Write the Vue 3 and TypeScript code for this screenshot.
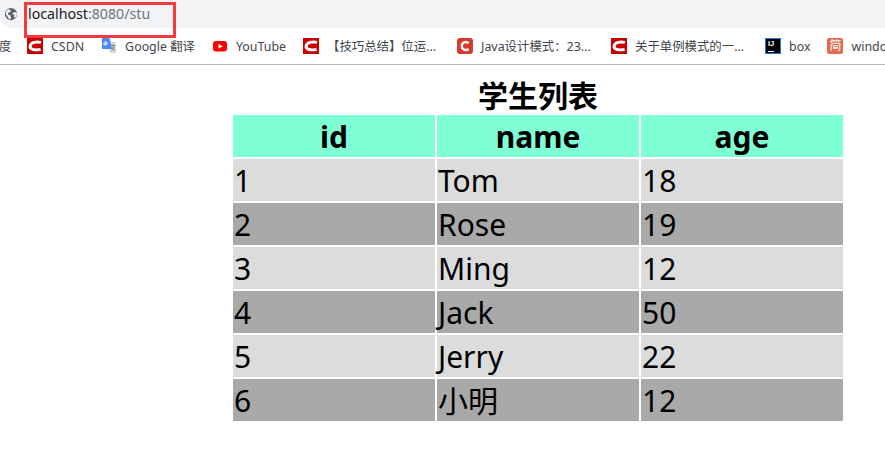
<script setup lang="ts">
interface Mark { label: string; kind: string; text: string; long?: boolean; }
const marks: Mark[] = [
  { label: 'CSDN', kind: 'csdn', text: '' },
  { label: 'Google 翻译', kind: 'gt', text: '' },
  { label: 'YouTube', kind: 'yt', text: '' },
  { label: '【技巧总结】位运...', kind: 'csdn', text: '', long: true },
  { label: 'Java设计模式：23...', kind: 'red', text: '', long: true },
  { label: '关于单例模式的一...', kind: 'csdn', text: '', long: true },
  { label: 'box', kind: 'ij', text: 'IJ' },
  { label: 'windows', kind: 'jian', text: '简' },
];
const students = [
  { id: 1, name: 'Tom', age: 18 },
  { id: 2, name: 'Rose', age: 19 },
  { id: 3, name: 'Ming', age: 12 },
  { id: 4, name: 'Jack', age: 50 },
  { id: 5, name: 'Jerry', age: 22 },
  { id: 6, name: '小明', age: 12 },
];
</script>

<template>
  <div class="page">
    <div class="topbar">
      <svg class="globe" viewBox="0 0 16 16" width="14" height="14">
        <circle cx="8" cy="8" r="7" fill="#5f6368" />
        <path d="M5 2.5 8 4 7 6 4.5 6.5 5 9l2.5.5L8 13 6 14 3 9.5 1.8 7 3 4ZM10 6.5l3.8-.8L15 8l-1.5 3.5-2 1 .2-3.5-2-1Z" fill="#f1f3f4" />
      </svg>
      <span class="url"><span class="host">localhost</span>:8080/stu</span>
      <div class="highlight"></div>
    </div>
    <div class="bookmarks">
      <span class="cut">度</span>
      <span v-for="m in marks" :key="m.label + m.kind" class="bm" :class="['bm-' + m.kind, { long: m.long }]">
        <span class="ico" :class="m.kind">
          <svg v-if="m.kind === 'yt'" viewBox="0 0 16 16" width="16" height="16">
            <rect x="1" y="3" width="14" height="10.5" rx="3" fill="#f00" />
            <path d="M6.5 5.8v5l4.2-2.5z" fill="#fff" />
          </svg>
          <svg v-else-if="m.kind === 'gt'" viewBox="0 0 16 16" width="16" height="16">
            <path d="M7 4h8v11H9z" fill="#d5d8dc" />
            <path d="M10 7.5h4M12 6.5v1M10.6 12.5c1.6-1 2.4-2.5 2.6-5M11 9c.6 1.4 1.6 2.6 3 3.4" stroke="#6b7078" stroke-width=".8" fill="none" />
            <path d="M1 0h7.5L11 11H1z" fill="#4c8bf5" />
            <path d="M7 5H4.6v1.3h1.2A1.6 1.6 0 1 1 5.4 4.3" stroke="#fff" fill="none" stroke-width="1" />
          </svg>
          <svg v-else-if="m.kind === 'csdn'" viewBox="0 0 16 16" width="16" height="16">
            <path d="M14 4.4C9.5 3.2 3.6 4.4 3.1 8.2 2.7 11.4 7.8 12.6 13.6 11.4" stroke="#fff" stroke-width="3" fill="none" />
          </svg>
          <svg v-else-if="m.kind === 'red'" viewBox="0 0 16 16" width="16" height="16">
            <path d="M11.6 5.2A4 4 0 1 0 11.6 10.8" stroke="#fff" stroke-width="2.4" fill="none" />
          </svg>
          <template v-else-if="m.kind === 'ij'">
            <span class="ij-text">{{ m.text }}</span>
            <span class="ij-line"></span>
          </template>
          <template v-else>{{ m.text }}</template>
        </span>
        <span class="label">{{ m.label }}</span>
      </span>
    </div>
    <main class="content">
      <h2 class="title">学生列表</h2>
      <table class="grid">
        <thead>
          <tr><th>id</th><th>name</th><th>age</th></tr>
        </thead>
        <tbody>
          <tr v-for="s in students" :key="s.id">
            <td>{{ s.id }}</td><td>{{ s.name }}</td><td>{{ s.age }}</td>
          </tr>
        </tbody>
      </table>
    </main>
  </div>
</template>

<style>
html, body { margin: 0; background: #fff; }
</style>

<style scoped>
.page {
  width: 885px;
  height: 465px;
  overflow: hidden;
  background: #fff;
  font-family: "Noto Sans", "Noto Sans CJK SC", sans-serif;
}
.topbar {
  position: relative;
  height: 28px;
  background: #f1f3f4;
  border-bottom-left-radius: 12px;
  display: flex;
  align-items: center;
  padding-left: 4px;
  box-sizing: border-box;
  gap: 10px;
}
.url {
  font: 14.2px/16px "Noto Sans", sans-serif;
  color: #70757a;
}
.host { color: #202124; }
.highlight {
  position: absolute;
  left: 24px;
  top: 2px;
  width: 152px;
  height: 36px;
  box-sizing: border-box;
  border: 3px solid #f33a3f;
  z-index: 2;
}
.bookmarks {
  height: 37px;
  box-sizing: border-box;
  border-bottom: 1px solid #b6b6b6;
  background: #fff;
  display: flex;
  align-items: center;
  white-space: nowrap;
  overflow: hidden;
  font-size: 12.4px;
  color: #41464c;
}
.cut { margin-left: -1px; width: 28px; flex: none; }
.bm { display: inline-flex; align-items: center; gap: 8px; flex: none; margin-right: 17px; }
.bm.long { margin-right: 0; }
.bm.long .label { width: 130px; }
.bm-jian { margin-right: 0; }
.ico {
  position: relative;
  width: 16px;
  height: 16px;
  flex: none;
  display: inline-flex;
  align-items: center;
  justify-content: center;
  font-weight: 700;
  line-height: 1;
}
.csdn { background: #c90000; }
.red { background: #d8392b; border-radius: 3px; }
.ij { background: #000; color: #fff; outline: 1px solid #1976d2; outline-offset: -1px; }
.ij-text {
  position: absolute;
  left: 3px;
  top: 2px;
  font: 700 7.5px/8px "Liberation Sans", sans-serif;
}
.ij-line {
  position: absolute;
  left: 3px;
  bottom: 2.5px;
  width: 6px;
  height: 1px;
  background: #fff;
}
.jian { background: #e26b52; color: #fff; font-size: 12px; font-weight: 400; border-radius: 2px; }
.content { display: flex; flex-direction: column; align-items: flex-start; padding-left: 231px; }
.title {
  width: 614px;
  margin: 11px 0 0;
  text-align: center;
  font-size: 30px;
  line-height: 39px;
  font-weight: 700;
  color: #000;
}
.grid {
  width: 614px;
  margin-top: -2px;
  border-spacing: 2px;
  border-collapse: separate;
  table-layout: fixed;
  font-size: 30px;
  color: #000;
}
.grid th, .grid td { height: 42px; padding: 2px 1px 0; box-sizing: border-box; line-height: 40px; }
.grid th { background: #7fffd4; font-weight: 700; text-align: center; }
.grid td { text-align: left; }
.grid tbody tr:nth-child(odd) td { background: #dcdcdc; }
.grid tbody tr:nth-child(even) td { background: #a9a9a9; }
</style>
